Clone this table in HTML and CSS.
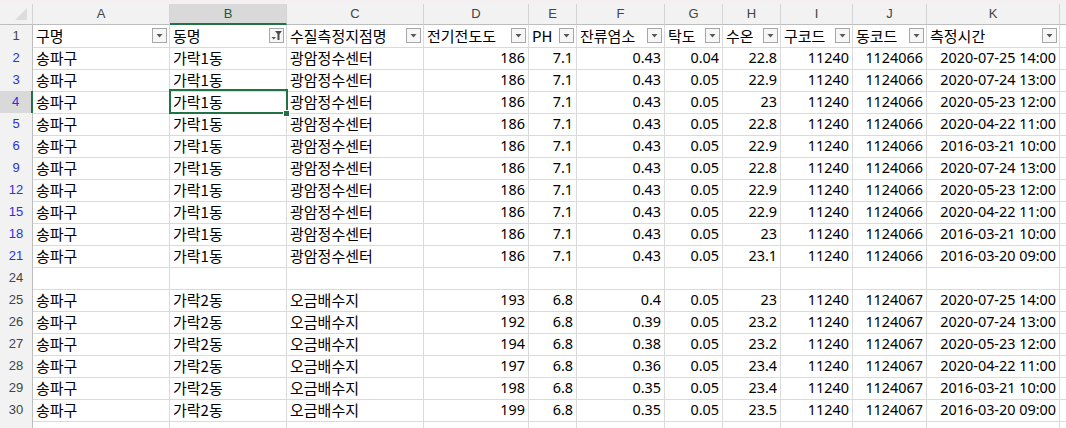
FILE: index.html
```html
<!DOCTYPE html>
<html lang="ko">
<head>
<meta charset="utf-8">
<link rel="stylesheet" href="styles.css">
</head>
<body>
<div class="sheet">
  <div class="topstrip"></div>
  <div class="row colhead">
    <div class="corner"><svg width="14" height="14" viewBox="0 0 14 14"><polygon points="13,1 13,13 1,13" fill="#dcdcdc"/></svg></div>
    <div class="ch">A</div><div class="ch sel">B</div><div class="ch">C</div><div class="ch">D</div><div class="ch">E</div><div class="ch">F</div><div class="ch">G</div><div class="ch">H</div><div class="ch">I</div><div class="ch">J</div><div class="ch">K</div><div class="ch last"></div>
  </div>

  <div class="row">
    <div class="rn">1</div>
    <div class="c hd">구명<span class="fb"><svg width="13" height="13" viewBox="0 0 13 13"><polygon points="3.5,5 9.5,5 6.5,8.5" fill="#595959"/></svg></span></div>
    <div class="c hd">동명<span class="fb"><svg width="13" height="13" viewBox="0 0 13 13"><polygon points="1.5,8 6,8 3.75,10.5" fill="#595959"/><polygon points="5,2 12,2 9.5,5 9.5,11 7.5,11 7.5,5" fill="#4a4a4a"/></svg></span></div>
    <div class="c hd">수질측정지점명<span class="fb"><svg width="13" height="13" viewBox="0 0 13 13"><polygon points="3.5,5 9.5,5 6.5,8.5" fill="#595959"/></svg></span></div>
    <div class="c hd">전기전도도<span class="fb"><svg width="13" height="13" viewBox="0 0 13 13"><polygon points="3.5,5 9.5,5 6.5,8.5" fill="#595959"/></svg></span></div>
    <div class="c hd">PH<span class="fb"><svg width="13" height="13" viewBox="0 0 13 13"><polygon points="3.5,5 9.5,5 6.5,8.5" fill="#595959"/></svg></span></div>
    <div class="c hd">잔류염소<span class="fb"><svg width="13" height="13" viewBox="0 0 13 13"><polygon points="3.5,5 9.5,5 6.5,8.5" fill="#595959"/></svg></span></div>
    <div class="c hd">탁도<span class="fb"><svg width="13" height="13" viewBox="0 0 13 13"><polygon points="3.5,5 9.5,5 6.5,8.5" fill="#595959"/></svg></span></div>
    <div class="c hd">수온<span class="fb"><svg width="13" height="13" viewBox="0 0 13 13"><polygon points="3.5,5 9.5,5 6.5,8.5" fill="#595959"/></svg></span></div>
    <div class="c hd">구코드<span class="fb"><svg width="13" height="13" viewBox="0 0 13 13"><polygon points="3.5,5 9.5,5 6.5,8.5" fill="#595959"/></svg></span></div>
    <div class="c hd">동코드<span class="fb"><svg width="13" height="13" viewBox="0 0 13 13"><polygon points="3.5,5 9.5,5 6.5,8.5" fill="#595959"/></svg></span></div>
    <div class="c hd">측정시간<span class="fb"><svg width="13" height="13" viewBox="0 0 13 13"><polygon points="3.5,5 9.5,5 6.5,8.5" fill="#595959"/></svg></span></div>
    <div class="c last"></div>
  </div>

  <div class="row"><div class="rn f">2</div><div class="c">송파구</div><div class="c">가락1동</div><div class="c">광암정수센터</div><div class="c n">186</div><div class="c n">7.1</div><div class="c n">0.43</div><div class="c n">0.04</div><div class="c n">22.8</div><div class="c n">11240</div><div class="c n">1124066</div><div class="c n">2020-07-25 14:00</div><div class="c last"></div></div>
  <div class="row"><div class="rn f">3</div><div class="c">송파구</div><div class="c">가락1동</div><div class="c">광암정수센터</div><div class="c n">186</div><div class="c n">7.1</div><div class="c n">0.43</div><div class="c n">0.05</div><div class="c n">22.9</div><div class="c n">11240</div><div class="c n">1124066</div><div class="c n">2020-07-24 13:00</div><div class="c last"></div></div>
  <div class="row"><div class="rn f rsel">4</div><div class="c">송파구</div><div class="c active">가락1동<span class="handle"></span></div><div class="c">광암정수센터</div><div class="c n">186</div><div class="c n">7.1</div><div class="c n">0.43</div><div class="c n">0.05</div><div class="c n">23</div><div class="c n">11240</div><div class="c n">1124066</div><div class="c n">2020-05-23 12:00</div><div class="c last"></div></div>
  <div class="row"><div class="rn f">5</div><div class="c">송파구</div><div class="c">가락1동</div><div class="c">광암정수센터</div><div class="c n">186</div><div class="c n">7.1</div><div class="c n">0.43</div><div class="c n">0.05</div><div class="c n">22.8</div><div class="c n">11240</div><div class="c n">1124066</div><div class="c n">2020-04-22 11:00</div><div class="c last"></div></div>
  <div class="row"><div class="rn f">6</div><div class="c">송파구</div><div class="c">가락1동</div><div class="c">광암정수센터</div><div class="c n">186</div><div class="c n">7.1</div><div class="c n">0.43</div><div class="c n">0.05</div><div class="c n">22.9</div><div class="c n">11240</div><div class="c n">1124066</div><div class="c n">2016-03-21 10:00</div><div class="c last"></div></div>
  <div class="row"><div class="rn f">9</div><div class="c">송파구</div><div class="c">가락1동</div><div class="c">광암정수센터</div><div class="c n">186</div><div class="c n">7.1</div><div class="c n">0.43</div><div class="c n">0.05</div><div class="c n">22.8</div><div class="c n">11240</div><div class="c n">1124066</div><div class="c n">2020-07-24 13:00</div><div class="c last"></div></div>
  <div class="row"><div class="rn f">12</div><div class="c">송파구</div><div class="c">가락1동</div><div class="c">광암정수센터</div><div class="c n">186</div><div class="c n">7.1</div><div class="c n">0.43</div><div class="c n">0.05</div><div class="c n">22.9</div><div class="c n">11240</div><div class="c n">1124066</div><div class="c n">2020-05-23 12:00</div><div class="c last"></div></div>
  <div class="row"><div class="rn f">15</div><div class="c">송파구</div><div class="c">가락1동</div><div class="c">광암정수센터</div><div class="c n">186</div><div class="c n">7.1</div><div class="c n">0.43</div><div class="c n">0.05</div><div class="c n">22.9</div><div class="c n">11240</div><div class="c n">1124066</div><div class="c n">2020-04-22 11:00</div><div class="c last"></div></div>
  <div class="row"><div class="rn f">18</div><div class="c">송파구</div><div class="c">가락1동</div><div class="c">광암정수센터</div><div class="c n">186</div><div class="c n">7.1</div><div class="c n">0.43</div><div class="c n">0.05</div><div class="c n">23</div><div class="c n">11240</div><div class="c n">1124066</div><div class="c n">2016-03-21 10:00</div><div class="c last"></div></div>
  <div class="row"><div class="rn f">21</div><div class="c">송파구</div><div class="c">가락1동</div><div class="c">광암정수센터</div><div class="c n">186</div><div class="c n">7.1</div><div class="c n">0.43</div><div class="c n">0.05</div><div class="c n">23.1</div><div class="c n">11240</div><div class="c n">1124066</div><div class="c n">2016-03-20 09:00</div><div class="c last"></div></div>
  <div class="row"><div class="rn">24</div><div class="c"></div><div class="c"></div><div class="c"></div><div class="c"></div><div class="c"></div><div class="c"></div><div class="c"></div><div class="c"></div><div class="c"></div><div class="c"></div><div class="c"></div><div class="c last"></div></div>
  <div class="row"><div class="rn">25</div><div class="c">송파구</div><div class="c">가락2동</div><div class="c">오금배수지</div><div class="c n">193</div><div class="c n">6.8</div><div class="c n">0.4</div><div class="c n">0.05</div><div class="c n">23</div><div class="c n">11240</div><div class="c n">1124067</div><div class="c n">2020-07-25 14:00</div><div class="c last"></div></div>
  <div class="row"><div class="rn">26</div><div class="c">송파구</div><div class="c">가락2동</div><div class="c">오금배수지</div><div class="c n">192</div><div class="c n">6.8</div><div class="c n">0.39</div><div class="c n">0.05</div><div class="c n">23.2</div><div class="c n">11240</div><div class="c n">1124067</div><div class="c n">2020-07-24 13:00</div><div class="c last"></div></div>
  <div class="row"><div class="rn">27</div><div class="c">송파구</div><div class="c">가락2동</div><div class="c">오금배수지</div><div class="c n">194</div><div class="c n">6.8</div><div class="c n">0.38</div><div class="c n">0.05</div><div class="c n">23.2</div><div class="c n">11240</div><div class="c n">1124067</div><div class="c n">2020-05-23 12:00</div><div class="c last"></div></div>
  <div class="row"><div class="rn">28</div><div class="c">송파구</div><div class="c">가락2동</div><div class="c">오금배수지</div><div class="c n">197</div><div class="c n">6.8</div><div class="c n">0.36</div><div class="c n">0.05</div><div class="c n">23.4</div><div class="c n">11240</div><div class="c n">1124067</div><div class="c n">2020-04-22 11:00</div><div class="c last"></div></div>
  <div class="row"><div class="rn">29</div><div class="c">송파구</div><div class="c">가락2동</div><div class="c">오금배수지</div><div class="c n">198</div><div class="c n">6.8</div><div class="c n">0.35</div><div class="c n">0.05</div><div class="c n">23.4</div><div class="c n">11240</div><div class="c n">1124067</div><div class="c n">2016-03-21 10:00</div><div class="c last"></div></div>
  <div class="row"><div class="rn">30</div><div class="c">송파구</div><div class="c">가락2동</div><div class="c">오금배수지</div><div class="c n">199</div><div class="c n">6.8</div><div class="c n">0.35</div><div class="c n">0.05</div><div class="c n">23.5</div><div class="c n">11240</div><div class="c n">1124067</div><div class="c n">2016-03-20 09:00</div><div class="c last"></div></div>
  <div class="row"><div class="rn"></div><div class="c"></div><div class="c"></div><div class="c"></div><div class="c"></div><div class="c"></div><div class="c"></div><div class="c"></div><div class="c"></div><div class="c"></div><div class="c"></div><div class="c"></div><div class="c last"></div></div>
</div>
</body>
</html>
```

FILE: styles.css
```css
html, body {
  margin: 0;
  padding: 0;
  background: #ffffff;
  overflow: hidden;
}

.sheet {
  width: 1066px;
  height: 428px;
  overflow: hidden;
  font-family: "Noto Sans CJK KR", "Noto Sans", sans-serif;
  font-size: 15px;
  color: #000000;
}

.topstrip {
  height: 4px;
  background: #f4f0f1;
}

.row {
  display: grid;
  grid-template-columns: 33px 137px 117px 137px 105px 48px 88px 58px 58px 72px 74px 133px 1fr;
  height: 22px;
}

.colhead {
  height: 21px;
}

.corner {
  background: #f2f2f2;
  border-right: 1px solid #d4d4d4;
  border-bottom: 1px solid #bdbdbd;
  box-sizing: border-box;
  display: flex;
  align-items: flex-end;
  justify-content: flex-end;
  padding: 0 4px 3px 0;
}

.ch {
  box-sizing: border-box;
  background: #f2f2f2;
  border-right: 1px solid #d4d4d4;
  border-bottom: 1px solid #bdbdbd;
  font-family: "Liberation Sans", "Noto Sans", sans-serif;
  font-size: 13px;
  color: #444444;
  text-align: center;
  line-height: 20px;
}

.ch.sel {
  background: #d9d9d9;
  border-bottom: 2px solid #217346;
  color: #1a5c38;
  line-height: 19px;
}

.ch.last {
  border-right: none;
}

.rn {
  box-sizing: border-box;
  background: #f2f2f2;
  border-right: 1px solid #bdbdbd;
  border-bottom: 1px solid #d4d4d4;
  font-family: "Liberation Sans", "Noto Sans", sans-serif;
  font-size: 13px;
  color: #444444;
  text-align: center;
  line-height: 22px;
}

.rn.f {
  color: #2f2fd6;
}

.rn.rsel {
  background: #d9d9d9;
  border-right: 2px solid #217346;
}

.c {
  box-sizing: border-box;
  border-right: 1px solid #dadada;
  border-bottom: 1px solid #dadada;
  padding: 0 3px 0 3px;
  line-height: 22px;
  white-space: nowrap;
  overflow: hidden;
  position: relative;
}

.c.n {
  text-align: right;
  font-family: "Noto Sans", "Noto Sans CJK KR", sans-serif;
  font-size: 14.4px;
}

.c.last {
  border-right: none;
}

.c.hd {
  overflow: visible;
}

.fb {
  position: absolute;
  right: 2px;
  top: 3px;
  width: 15px;
  height: 15px;
  box-sizing: border-box;
  border: 1px solid #a6a6a6;
  background: #f7f7f7;
  display: flex;
  align-items: center;
  justify-content: center;
}

.fb svg {
  display: block;
}

.c.active {
  overflow: visible;
  z-index: 2;
}

.c.active::before {
  content: "";
  position: absolute;
  left: -1px;
  top: -2px;
  right: -2px;
  bottom: -1px;
  border: 2px solid #217346;
  pointer-events: none;
}

.handle {
  position: absolute;
  right: -4px;
  bottom: -4px;
  width: 5px;
  height: 5px;
  background: #217346;
  border: 1px solid #ffffff;
  z-index: 3;
}
```
